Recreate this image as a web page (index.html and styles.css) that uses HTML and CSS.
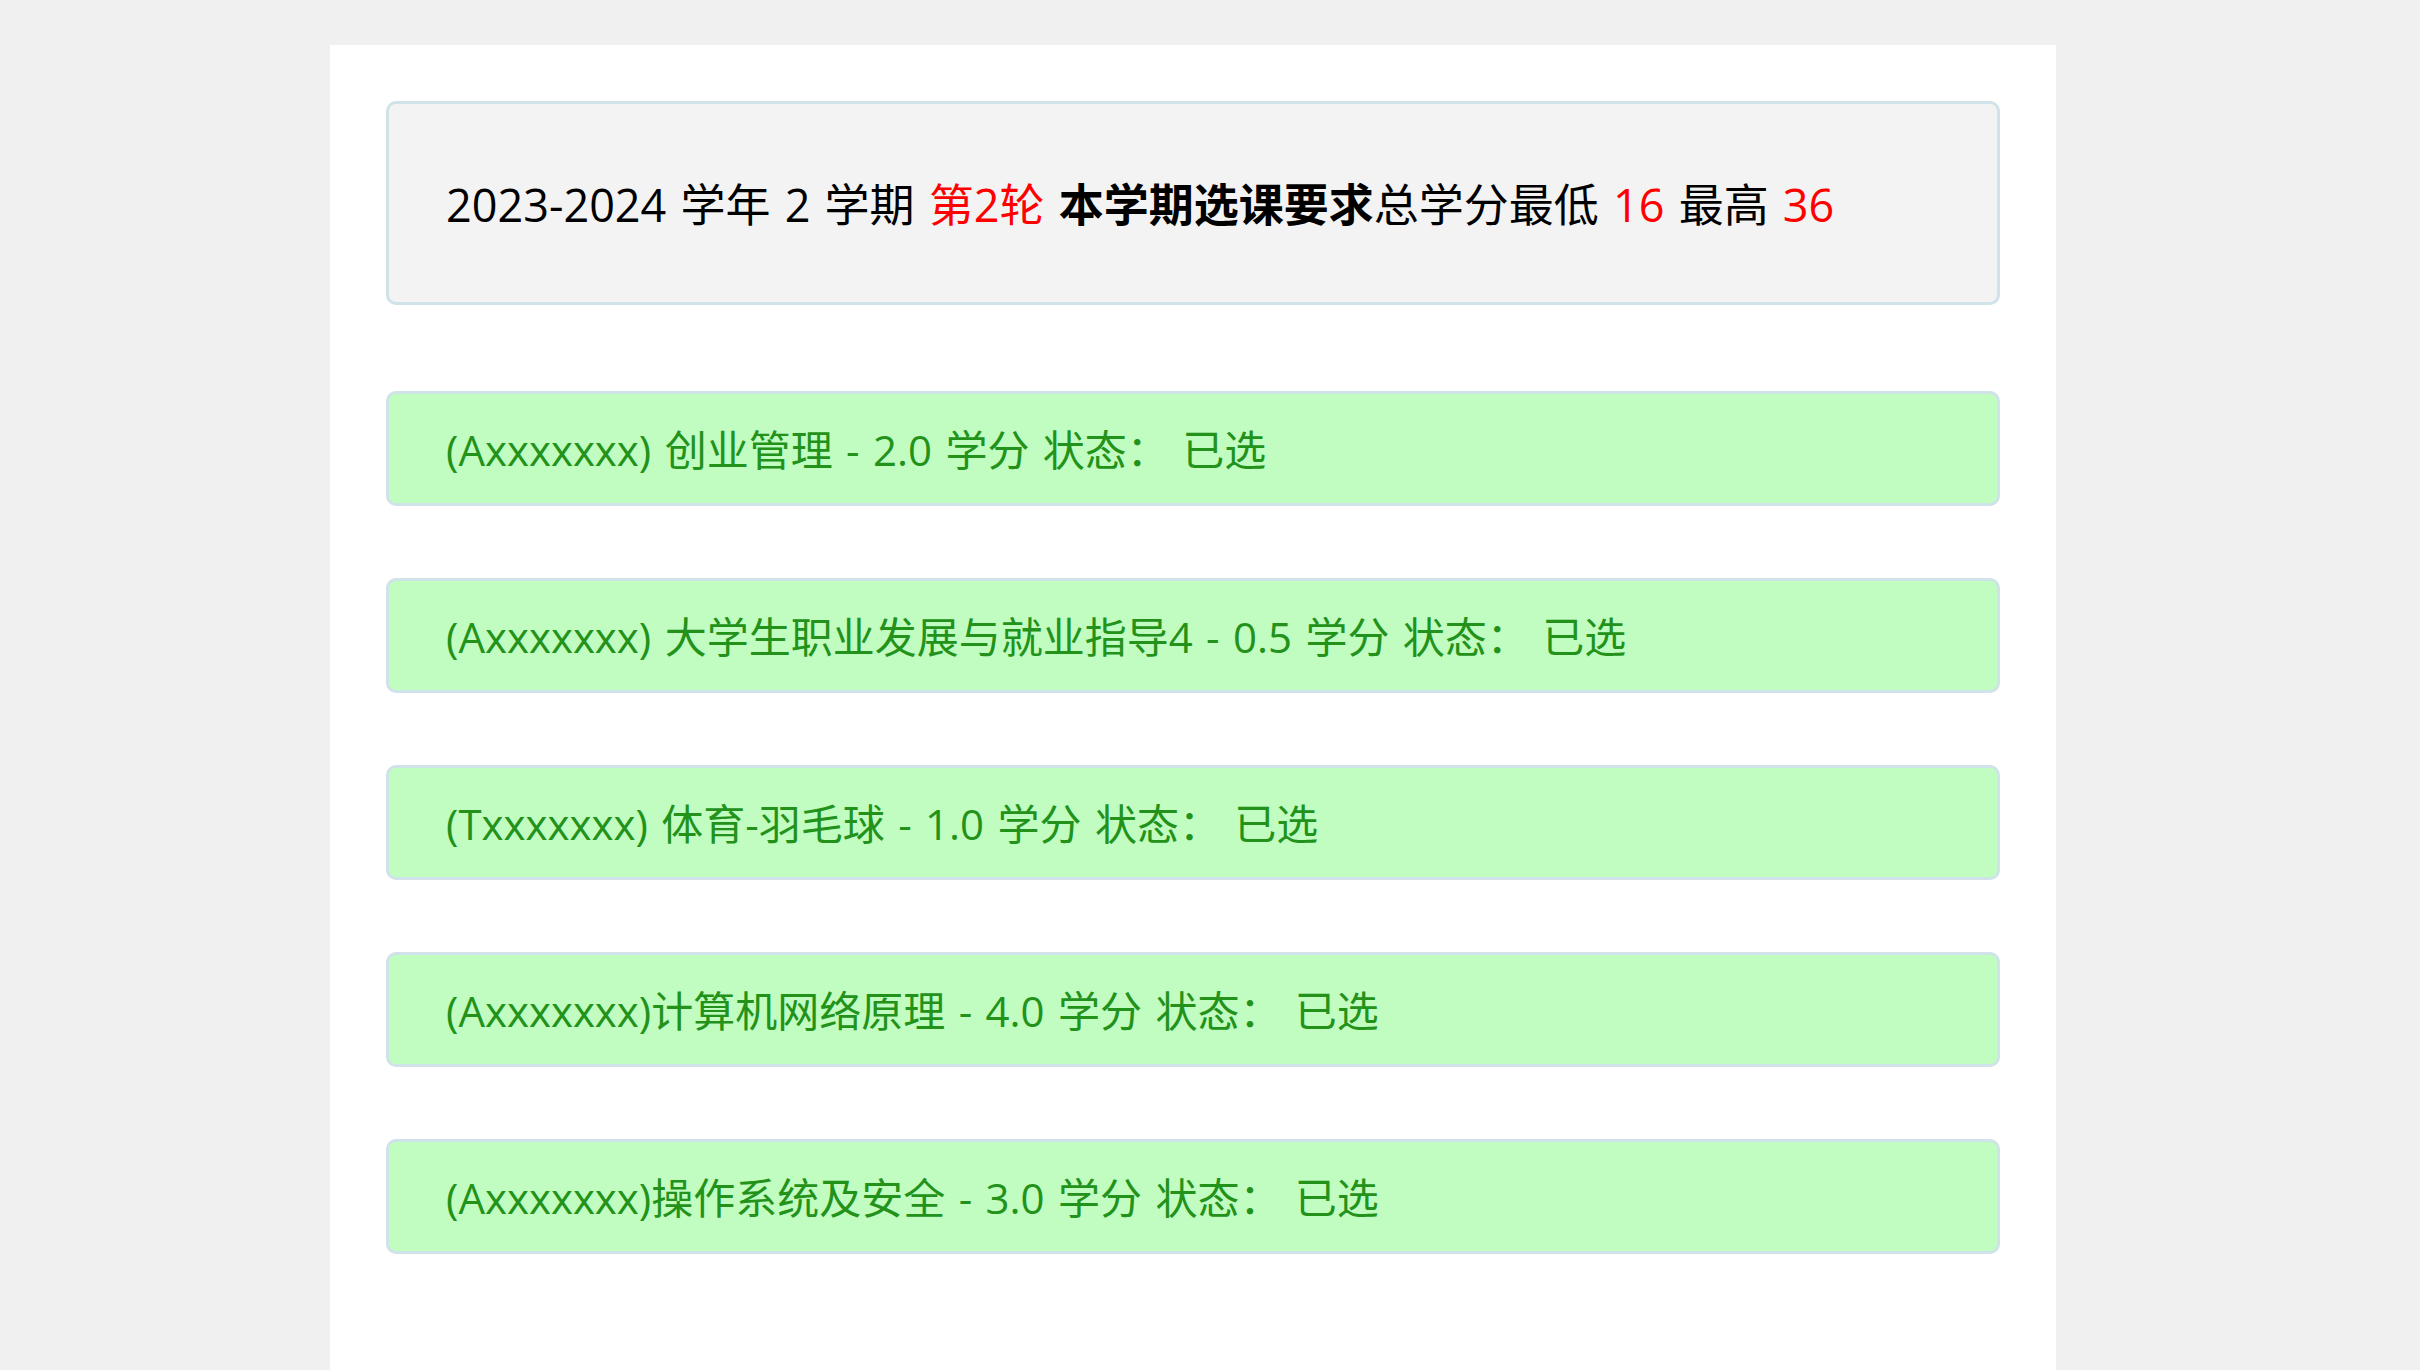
FILE: index.html
```html
<!DOCTYPE html>
<html lang="zh-CN">
<head>
    <meta charset="UTF-8">
    <meta name="viewport" content="width=device-width, initial-scale=1.0">
    <title>选课结果</title>
    <link rel="stylesheet" href="styles.css">
</head>
<body>
    <div class="container">
        <!-- 学期信息 -->
        <div class="term-info">
            2023-2024 学年 2 学期 <span class="red">第2轮</span> <strong>本学期选课要求</strong>总学分最低 <span class="red">16</span> 最高 <span class="red">36</span>
        </div>

        <!-- 已选课程列表 -->
        <div id="course-list">
            <div class="course">(Axxxxxxx) 创业管理 - 2.0 学分 状态： 已选</div>
            <div class="course">(Axxxxxxx) 大学生职业发展与就业指导4 - 0.5 学分 状态： 已选</div>
            <div class="course">(Txxxxxxx) 体育-羽毛球 - 1.0 学分 状态： 已选</div>
            <div class="course">(Axxxxxxx)计算机网络原理 - 4.0 学分 状态： 已选</div>
            <div class="course">(Axxxxxxx)操作系统及安全 - 3.0 学分 状态： 已选</div>
        </div>
    </div>
</body>
</html>
```

FILE: styles.css
```css
/* 全局样式 */
body {
    font-family: "Open Sans", "Noto Sans CJK SC", sans-serif;
    margin: 0;
    padding: 0;
    background-color: #f0f0f0;
    color: #000;
}
.container {
    box-sizing: border-box;
    width: 1726px;
    min-height: calc(100vh - 45px);
    margin: 45px 0 0 330px;
    padding: 56px;
    background: #fff;
}
.term-info {
    background: #f3f3f3;
    border: 3px solid #cfe3e8;
    border-radius: 10px;
    padding: 67px 57px 63px;
    font-size: 45px;
    line-height: 1.5;
    word-spacing: 2.5px;
    margin-bottom: 86px;
}
.term-info strong {
    font-weight: bold;
}
.red {
    color: #ff0000;
}
#course-list {
    display: flex;
    flex-direction: column;
    gap: 72px;
}
.course {
    background: #c1fdc0;
    border: 3px solid #cfe3e8;
    border-radius: 10px;
    padding: 24px 57px 22px;
    font-size: 42px;
    line-height: 1.5;
    word-spacing: 2.5px;
    color: #22921b;
}
```
